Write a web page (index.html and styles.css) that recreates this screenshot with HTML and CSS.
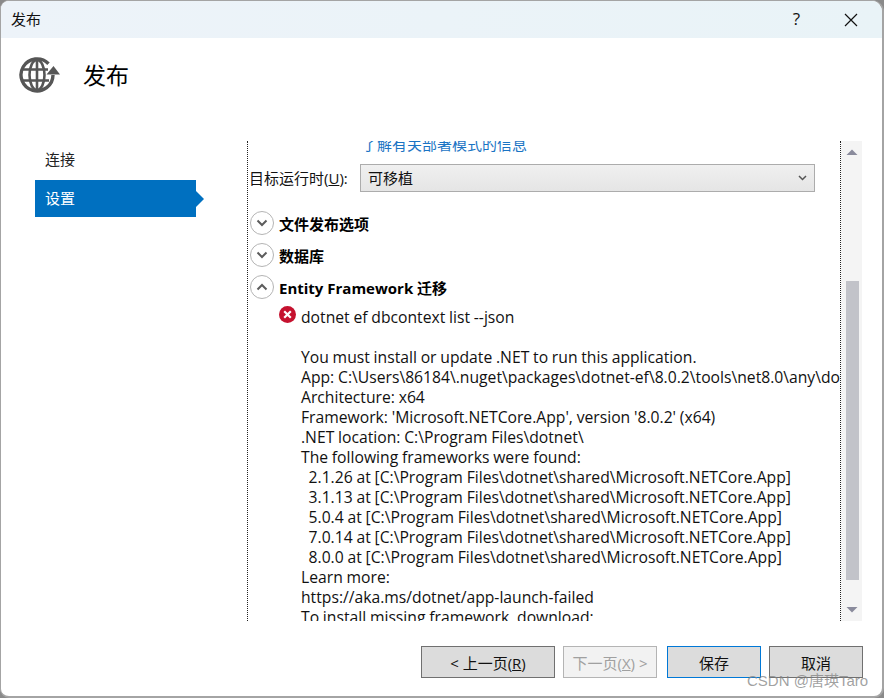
FILE: index.html
```html
<!DOCTYPE html>
<html lang="zh-CN">
<head>
<meta charset="utf-8">
<title>发布</title>
<link rel="stylesheet" href="styles.css">
</head>
<body>
<div class="window">
  <div class="titlebar">
    <span class="title">发布</span>
    <span class="help">?</span>
    <svg class="close" width="14" height="14" viewBox="0 0 14 14"><path d="M1 1L13 13M13 1L1 13" stroke="#111" stroke-width="1.2" fill="none"/></svg>
  </div>
  <div class="header">
    <svg class="globe" width="42" height="38" viewBox="0 0 42 38">
      <g fill="none" stroke="#565656">
        <path d="M29.5 6.8A16 16 0 1 0 34 18" stroke-width="3.4"/>
        <ellipse cx="18" cy="18" rx="7.5" ry="15" stroke-width="2.6"/>
        <path d="M3 12.5H29M3 23.5H30M18 3V33" stroke-width="2.6"/>
      </g>
      <path d="M27.5 17.5L34.5 9L41 17.5Z" fill="#565656"/>
    </svg>
    <h1 class="heading">发布</h1>
  </div>
  <div class="main">
    <nav class="sidebar">
      <div class="nav-item">连接</div>
      <div class="nav-item active">设置</div>
    </nav>
    <div class="pane">
      <div class="clip">
        <a class="link">了解有关部署模式的信息</a>
        <div class="field">
          <label class="field-label">目标运行时(<u>U</u>):</label>
          <div class="combo"><span class="combo-value">可移植</span>
            <svg width="9" height="6" viewBox="0 0 9 6"><path d="M1 1L4.5 4.5L8 1" stroke="#555" stroke-width="1.5" fill="none"/></svg>
          </div>
        </div>
        <div class="section first"><span class="chev"><svg width="12" height="8" viewBox="0 0 12 8"><path d="M1.5 1.5L6 6L10.5 1.5" stroke="#5c5c5c" stroke-width="2" fill="none"/></svg></span><b>文件发布选项</b></div>
        <div class="section"><span class="chev"><svg width="12" height="8" viewBox="0 0 12 8"><path d="M1.5 1.5L6 6L10.5 1.5" stroke="#5c5c5c" stroke-width="2" fill="none"/></svg></span><b>数据库</b></div>
        <div class="section"><span class="chev"><svg width="12" height="8" viewBox="0 0 12 8"><path d="M1.5 6.5L6 2L10.5 6.5" stroke="#5c5c5c" stroke-width="2" fill="none"/></svg></span><b>Entity Framework 迁移</b></div>
        <div class="error">
          <svg class="err-icon" width="17" height="17" viewBox="0 0 17 17"><circle cx="8.5" cy="8.5" r="8.5" fill="#c5122f"/><path d="M5.2 5.2L11.8 11.8M11.8 5.2L5.2 11.8" stroke="#fff" stroke-width="2.2"/></svg>
          <pre class="log">dotnet ef dbcontext list --json

You must install or update .NET to run this application.
App: C:\Users\86184\.nuget\packages\dotnet-ef\8.0.2\tools\net8.0\any\dotnet-ef.dll
Architecture: x64
Framework: 'Microsoft.NETCore.App', version '8.0.2' (x64)
.NET location: C:\Program Files\dotnet\
The following frameworks were found:
  2.1.26 at [C:\Program Files\dotnet\shared\Microsoft.NETCore.App]
  3.1.13 at [C:\Program Files\dotnet\shared\Microsoft.NETCore.App]
  5.0.4 at [C:\Program Files\dotnet\shared\Microsoft.NETCore.App]
  7.0.14 at [C:\Program Files\dotnet\shared\Microsoft.NETCore.App]
  8.0.0 at [C:\Program Files\dotnet\shared\Microsoft.NETCore.App]
Learn more:
https://aka.ms/dotnet/app-launch-failed
To install missing framework, download:
https://aka.ms/dotnet-core-applaunch</pre>
        </div>
      </div>
      <div class="scrollbar">
        <svg width="14" height="8" viewBox="0 0 14 8"><path d="M1.5 7L7 1.5L12.5 7Z" fill="#8a8b9c"/></svg>
        <div class="track"><div class="thumb"></div></div>
        <svg width="14" height="8" viewBox="0 0 14 8"><path d="M1.5 1L7 6.5L12.5 1Z" fill="#8a8b9c"/></svg>
      </div>
    </div>
  </div>
  <div class="footer">
    <button class="btn prev">&lt; 上一页(<u>R</u>)</button>
    <button class="btn next" disabled>下一页(<u>X</u>) &gt;</button>
    <button class="btn save">保存</button>
    <button class="btn cancel">取消</button>
  </div>
</div>
<div class="watermark">CSDN @唐瑛Taro</div>
</body>
</html>
```
FILE: styles.css
```css
* { box-sizing: border-box; }
html, body { margin: 0; height: 100%; }
body {
  width: 884px; height: 698px; overflow: hidden; position: relative;
  background: #8a8a8a;
  font-family: "Open Sans", "Noto Sans CJK SC", sans-serif;
  font-size: 15px; color: #111;
}
.window {
  width: 884px; height: 698px; background: #fff;
  border: 1px solid #a4a4a4; border-width: 1px 2px 2px 1px;
  border-radius: 9px 12px 10px 9px;
  display: flex; flex-direction: column; overflow: hidden;
}
.titlebar {
  height: 37px; flex: none; display: flex; align-items: center;
  background: linear-gradient(90deg, #edf3f9, #e9f3f7);
  padding: 0 24px 0 10px;
}
.title { font-size: 15px; flex: 1; margin-top: -2px; }
.help { font-size: 17px; margin-right: 44px; margin-top: -2px; }
.close { display: block; }
.header { height: 103px; flex: none; display: flex; align-items: flex-start; padding: 19px 0 0 18px; }
.globe { display: block; }
.heading { margin: -1px 0 0 22px; font-size: 23px; font-weight: 400; line-height: 38px; color: #000; }
.main { height: 480px; flex: none; display: flex; }
.sidebar { width: 246px; padding: 0 51px 0 34px; flex: none; font-size: 15px; }
.nav-item { height: 37px; padding-left: 10px; line-height: 36px; color: #222; }
.nav-item:first-child { margin-bottom: 2px; }
.nav-item.active { background: #0070c0; color: #fff; position: relative; }
.nav-item.active::after {
  content: ""; position: absolute; left: 100%; top: 11px;
  border-left: 8px solid #0070c0; border-top: 8px solid transparent; border-bottom: 8px solid transparent;
}
.pane { width: 615px; display: flex; flex: none; }
.clip {
  width: 594px; flex: none; overflow: hidden; position: relative;
  border-left: 1px dotted #222; border-right: 1px dotted #222;
}
.link { display: block; margin: -7px 0 0 114px; height: 20px; line-height: 20px; color: #1a74c4; font-size: 15px; }
.field { display: flex; align-items: center; margin-top: 10px; height: 28px; padding-left: 1px; }
.field-label { width: 111px; flex: none; font-size: 15px; margin-top: -2px; }
.combo {
  width: 455px; height: 28px; flex: none;
  border: 1px solid #acacac; background: linear-gradient(#f0f0f0, #e5e5e5);
  display: flex; align-items: center; justify-content: space-between;
  padding: 0 7px 0 7px; font-size: 15px;
}
.combo-value { margin-top: -2px; }
.section { height: 32px; display: flex; align-items: center; padding-left: 2px; font-size: 15px; }
.section.first { margin-top: 15px; }
.section b { font-weight: 700; margin-left: 6px; color: #000; }
.chev {
  width: 24px; height: 24px; border-radius: 50%; border: 1.5px solid #b4b4b4; flex: none;
  display: flex; align-items: center; justify-content: center;
}
.chev svg { display: block; }
.section b { margin-left: 5px; }
.error { display: flex; align-items: flex-start; padding: 0 0 0 31px; }
.err-icon { flex: none; margin-top: 3px; }
.log {
  margin: 4px 0 0 5px; font: inherit; font-size: 15.7px; word-spacing: -0.3px; line-height: 20px; white-space: pre; color: #111;
}
.scrollbar {
  width: 21px; flex: none; background: #f4f4f4;
  display: flex; flex-direction: column; align-items: center; padding: 7px 0;
}
.scrollbar svg { display: block; flex: none; }
.track { flex: 1; width: 100%; padding: 125px 3px 26px 5px; }
.thumb { height: 100%; background: #c2c3c9; }
.footer { flex: 1; display: flex; padding: 25px 0 0 420px; gap: 8px; align-items: flex-start; }
.btn {
  height: 32px; width: 94px; flex: none; background: #dcdcdc; border: 1px solid #707070;
  font: inherit; font-size: 15px; color: #111; padding: 0;
}
.prev { width: 134px; }
.next { background: #f2f2f2; border-color: #b4b4b4; color: #a0a0a0; }
.save { border-color: #0078d7; margin-left: 2px; }
.watermark {
  position: absolute; left: 747px; top: 669px; font-size: 15px; color: rgba(130,130,130,.75);
  font-family: "Liberation Sans", "Noto Sans CJK SC", sans-serif; white-space: nowrap;
}
```
